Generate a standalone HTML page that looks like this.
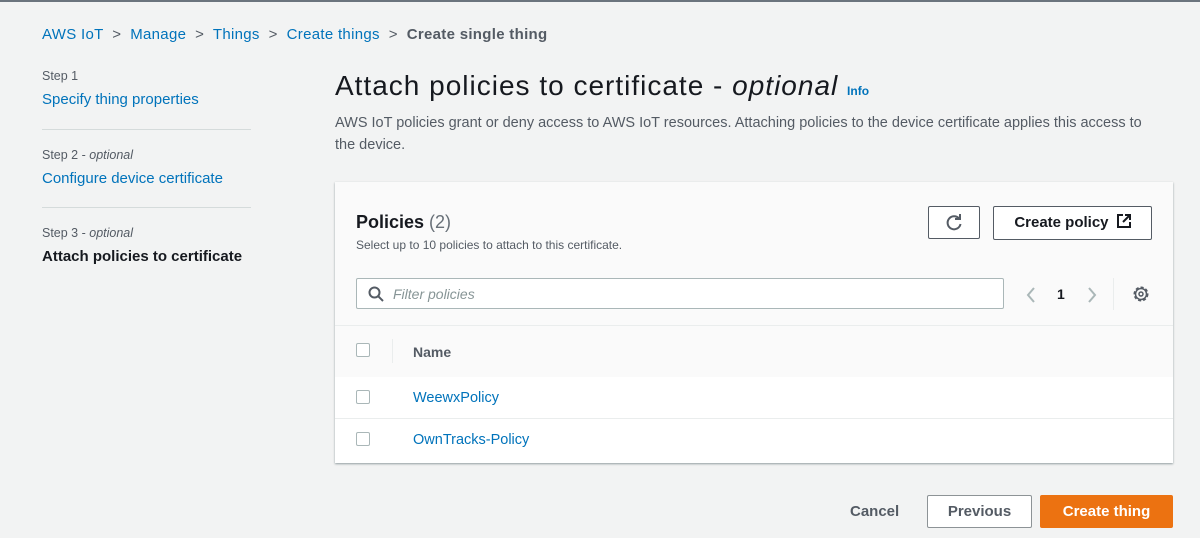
<!DOCTYPE html>
<html><head><style>
*{margin:0;padding:0;box-sizing:border-box}
body{width:1200px;height:538px;background:#f2f3f3;font-family:"Liberation Sans",sans-serif;position:relative;overflow:hidden;color:#16191f;border-top:2px solid #6b747d}
.a{position:absolute;white-space:nowrap}
.lk{color:#0073bb}
.bc{font-size:15px;top:24px;letter-spacing:0.3px}
.sep{color:#545b64}
.g{color:#545b64}
.hr{position:absolute;left:42px;width:209px;height:1px;background:#d5dbdb}
.btn{position:absolute;border:1px solid #545b64;background:#fff;border-radius:2px;font-weight:bold;font-size:15px;color:#16191f;text-align:center}
.cb{position:absolute;width:14px;height:14px;border:1px solid #aab7b8;border-radius:2px;background:#fff}
</style></head><body>
<div class="a bc" style="left:42px"><span class="lk">AWS IoT</span> <span class="sep">&nbsp;&gt;&nbsp;</span> <span class="lk">Manage</span> <span class="sep">&nbsp;&gt;&nbsp;</span> <span class="lk">Things</span> <span class="sep">&nbsp;&gt;&nbsp;</span> <span class="lk">Create things</span> <span class="sep">&nbsp;&gt;&nbsp;</span> <span class="g" style="font-weight:bold">Create single thing</span></div>
<div class="a g" style="left:42px;top:67px;font-size:12.5px">Step 1</div>
<div class="a lk" style="left:42px;top:89px;font-size:15px">Specify thing properties</div>
<div class="hr" style="top:127px"></div>
<div class="a g" style="left:42px;top:146px;font-size:12.5px">Step 2 - <i>optional</i></div>
<div class="a lk" style="left:42px;top:168px;font-size:15px">Configure device certificate</div>
<div class="hr" style="top:205px"></div>
<div class="a g" style="left:42px;top:224px;font-size:12.5px">Step 3 - <i>optional</i></div>
<div class="a" style="left:42px;top:246px;font-size:15px;font-weight:bold">Attach policies to certificate</div>
<div class="a" style="left:335px;top:68px;font-size:28px;letter-spacing:1px">Attach policies to certificate - <i>optional</i> <span class="lk" style="font-size:12px;font-weight:bold;letter-spacing:0">Info</span></div>
<div class="a g" style="left:335px;top:110px;font-size:14.5px;line-height:22px;white-space:normal;width:825px">AWS IoT policies grant or deny access to AWS IoT resources. Attaching policies to the device certificate applies this access to the device.</div>
<div style="position:absolute;left:335px;top:180px;width:838px;height:281px;background:#fafafa;box-shadow:0 1px 2px rgba(0,28,36,.4)">
<div class="a" style="left:21px;top:30px;font-size:18px;font-weight:bold">Policies <span style="font-weight:normal;color:#687078">(2)</span></div>
<div class="a g" style="left:21px;top:56px;font-size:12px">Select up to 10 policies to attach to this certificate.</div>
<div class="btn" style="left:593px;top:24px;width:52px;height:33px"><svg width="20" height="20" viewBox="0 0 20 20" style="margin-top:6px"><path d="M15 5.5A6.5 6.5 0 1 0 16.5 11" fill="none" stroke="#545b64" stroke-width="2"/><path d="M11 5h5V0" fill="none" stroke="#545b64" stroke-width="2" transform="translate(0,1)"/></svg></div>
<div class="btn" style="left:658px;top:24px;width:159px;height:34px;line-height:32px">Create policy <svg width="14" height="14" viewBox="0 0 14 14" style="vertical-align:-1px;margin-left:4px"><path d="M6 1H1v12h12V8M8 1h5v5M13 1L6 8" fill="none" stroke="#16191f" stroke-width="2"/></svg></div>
<div style="position:absolute;left:21px;top:96px;width:648px;height:31px;border:1px solid #aab7b8;border-radius:2px;background:#fff"><svg class="a" style="left:11px;top:7px" width="16" height="16" viewBox="0 0 16 16"><circle cx="6.5" cy="6.5" r="5" fill="none" stroke="#545b64" stroke-width="2"/><path d="M10 10l5 5" stroke="#545b64" stroke-width="2"/></svg><span class="a" style="left:36px;top:7px;font-size:14px;font-style:italic;color:#879596">Filter policies</span></div>
<svg class="a" style="left:690px;top:104px" width="12" height="18" viewBox="0 0 12 18"><path d="M9 2L3 9l6 7" fill="none" stroke="#aab7b8" stroke-width="2"/></svg>
<div class="a" style="left:722px;top:104px;font-size:14px;font-weight:bold">1</div>
<svg class="a" style="left:751px;top:104px" width="12" height="18" viewBox="0 0 12 18"><path d="M3 2l6 7-6 7" fill="none" stroke="#aab7b8" stroke-width="2"/></svg>
<div style="position:absolute;left:778px;top:96px;width:1px;height:32px;background:#eaeded"></div>
<svg class="a" style="left:797px;top:103px" width="18" height="18" viewBox="0 0 18 18"><circle cx="9" cy="9" r="6.5" fill="none" stroke="#545b64" stroke-width="2" stroke-dasharray="3 2"/><circle cx="9" cy="9" r="5.5" fill="none" stroke="#545b64" stroke-width="1.5"/><circle cx="9" cy="9" r="2" fill="none" stroke="#545b64" stroke-width="1.5"/></svg>
<div style="position:absolute;left:0;top:143px;width:838px;height:1px;background:#eaeded"></div>
<div class="cb" style="left:21px;top:161px"></div>
<div style="position:absolute;left:57px;top:157px;width:1px;height:24px;background:#eaeded"></div>
<div class="a" style="left:78px;top:162px;font-size:14px;font-weight:bold;color:#545b64">Name</div>
<div style="position:absolute;left:0;top:195px;width:838px;height:86px;background:#fff"></div>
<div style="position:absolute;left:0;top:236px;width:838px;height:1px;background:#eaeded"></div>
<div class="cb" style="left:21px;top:208px"></div>
<div class="a lk" style="left:78px;top:208px;font-size:14.5px">WeewxPolicy</div>
<div class="cb" style="left:21px;top:250px"></div>
<div class="a lk" style="left:78px;top:250px;font-size:14.5px">OwnTracks-Policy</div>
</div>
<div class="a" style="left:850px;top:501px;font-size:15px;font-weight:bold;color:#545b64">Cancel</div>
<div class="btn" style="left:927px;top:493px;width:105px;height:33px;line-height:31px;color:#545b64;border-color:#8d9396">Previous</div>
<div class="btn" style="left:1040px;top:493px;width:133px;height:33px;line-height:33px;background:#ec7211;border:none;color:#fff">Create thing</div>
</body></html>
